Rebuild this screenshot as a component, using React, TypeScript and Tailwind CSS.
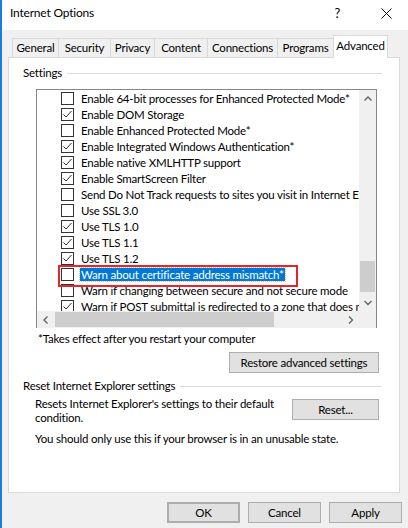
import React from "react";

const items: [string, boolean][] = [
  ["Enable 64-bit processes for Enhanced Protected Mode*", false],
  ["Enable DOM Storage", true],
  ["Enable Enhanced Protected Mode*", false],
  ["Enable Integrated Windows Authentication*", true],
  ["Enable native XMLHTTP support", true],
  ["Enable SmartScreen Filter", true],
  ["Send Do Not Track requests to sites you visit in Internet Explorer*", false],
  ["Use SSL 3.0", false],
  ["Use TLS 1.0", true],
  ["Use TLS 1.1", true],
  ["Use TLS 1.2", true],
  ["Warn about certificate address mismatch*", false],
  ["Warn if changing between secure and not secure mode", false],
  ["Warn if POST submittal is redirected to a zone that does not permit posts", true],
];

function Check({ checked }: { checked: boolean }) {
  return (
    <div className="w-[13px] h-[13px] border border-[#333333] bg-white shrink-0 flex items-center justify-center">
      {checked && (
        <svg width="11" height="11" viewBox="0 0 11 11">
          <polyline points="1.5,5.5 4,8 9.5,2" fill="none" stroke="#333" strokeWidth="1" />
        </svg>
      )}
    </div>
  );
}

function Chevron({ dir }: { dir: "up" | "down" | "left" | "right" }) {
  const pts =
    dir === "up"
      ? "0.5,4.5 4,1 7.5,4.5"
      : dir === "down"
      ? "0.5,1 4,4.5 7.5,1"
      : dir === "left"
      ? "4.5,0.5 1,4 4.5,7.5"
      : "1,0.5 4.5,4 1,7.5";
  const w = dir === "up" || dir === "down" ? 8 : 6;
  const h = dir === "up" || dir === "down" ? 6 : 8;
  return (
    <svg width={w} height={h} viewBox={`0 0 ${w} ${h}`}>
      <polyline points={pts} fill="none" stroke="#606060" strokeWidth="1.3" />
    </svg>
  );
}

function Btn({ children, className = "" }: { children: React.ReactNode; className?: string }) {
  return (
    <div
      className={
        "h-[21px] bg-[#e1e1e1] border border-[#adadad] flex items-center justify-center text-black whitespace-nowrap " +
        className
      }
    >
      {children}
    </div>
  );
}

export default function App() {
  const tabs: [string, number][] = [
    ["General", 46],
    ["Security", 52],
    ["Privacy", 44],
    ["Content", 53],
    ["Connections", 70],
    ["Programs", 56],
  ];
  return (
    <div
      className="w-[408px] h-[528px] bg-[#f0f0f0] flex overflow-hidden text-black text-[11.5px] tracking-[-0.2px]"
      style={{ fontFamily: 'Lato, "Noto Sans", sans-serif' }}
    >
      <div className="w-[2px] h-full bg-[#1a7fd4] shrink-0" />
      <div className="flex-1 flex flex-col">
        {/* Title bar */}
        <div className="h-[30px] bg-white flex items-center relative">
          <span className="ml-[8px] text-[12px] leading-none mt-[-4px]">Internet Options</span>
          <span className="ml-auto mr-[41px] text-[13px] leading-none mt-[-4px]">?</span>
          <svg width="11" height="11" viewBox="0 0 11 11" className="mr-[16px] mt-[-4px]">
            <line x1="0.5" y1="0.5" x2="10.5" y2="10.5" stroke="#111" strokeWidth="1" />
            <line x1="10.5" y1="0.5" x2="0.5" y2="10.5" stroke="#111" strokeWidth="1" />
          </svg>
        </div>

        {/* Tabs */}
        <div className="flex items-end pl-[10px] mt-[5px] h-[23px] -mb-px relative z-10">
          {tabs.map(([t, w]) => (
            <div
              key={t}
              className="h-[19px] mb-px border-t border-l border-[#d9d9d9] flex items-center justify-center leading-none"
              style={{ width: w }}
            >
              <span className="mt-[-1px]">{t}</span>
            </div>
          ))}
          <div className="h-[23px] w-[55px] bg-white border-t border-l border-r border-[#d9d9d9] flex items-center justify-center leading-none">
            <span className="mt-[-2px]">Advanced</span>
          </div>
        </div>

        {/* Panel */}
        <div className="ml-[6px] w-[392px] h-[436px] bg-white border border-[#d9d9d9] flex flex-col">
          <div className="mt-[7px] h-[16px] flex items-center pl-[14px] pr-[17px]">
            <span className="leading-none">Settings</span>
            <div className="flex-1 h-px bg-[#dcdcdc] ml-[5px]" />
          </div>

          {/* List box */}
          <div className="relative mt-[8px] ml-[27px] w-[341px] h-[239px] border border-[#828790] bg-white flex flex-col">
            <div className="flex h-[221px]">
              <div className="w-[322px] h-[221px] overflow-hidden flex flex-col">
                {items.map(([label, checked], i) => {
                  const sel = i === 11;
                  return (
                    <div key={i} className="h-[16px] shrink-0 flex items-center pl-[24px] whitespace-nowrap">
                      <Check checked={checked} />
                      <span
                        className={
                          "ml-[6px] leading-[13px] px-px " +
                          (sel ? "bg-[#0078d7] text-white outline-1 outline-dotted outline-[#f3b98a]" : "")
                        }
                      >
                        {label}
                      </span>
                    </div>
                  );
                })}
              </div>
              {/* vertical scrollbar */}
              <div className="w-[17px] h-[221px] bg-[#f0f0f0] flex flex-col items-center">
                <div className="h-[17px] flex items-center justify-center">
                  <Chevron dir="up" />
                </div>
                <div className="flex-1 w-full flex flex-col items-center">
                  <div className="mt-[154px] w-[15px] h-[31px] bg-[#cdcdcd]" />
                </div>
                <div className="h-[17px] flex items-center justify-center">
                  <Chevron dir="down" />
                </div>
              </div>
            </div>
            {/* horizontal scrollbar */}
            <div className="flex h-[17px]">
              <div className="w-[322px] h-[17px] bg-[#f0f0f0] flex items-center">
                <div className="w-[17px] h-full flex items-center justify-center">
                  <Chevron dir="left" />
                </div>
                <div className="ml-px w-[219px] h-[15px] bg-[#cdcdcd]" />
                <div className="flex-1" />
                <div className="w-[17px] h-full flex items-center justify-center">
                  <Chevron dir="right" />
                </div>
              </div>
              <div className="w-[17px] h-[17px] bg-[#f0f0f0]" />
            </div>
            {/* annotation box */}
            <div className="absolute left-[21px] top-[175px] w-[240px] h-[22px] border-2 border-[#e3262e] pointer-events-none" />
          </div>

          <div className="mt-[3px] h-[16px] flex items-center pl-[29px] leading-none">
            *Takes effect after you restart your computer
          </div>
          <div className="mt-[5px] flex justify-end pr-[20px]">
            <Btn className="w-[150px]">Restore advanced settings</Btn>
          </div>

          <div className="mt-[5px] h-[16px] flex items-center pl-[14px] pr-[17px]">
            <span className="leading-none whitespace-nowrap">Reset Internet Explorer settings</span>
            <div className="flex-1 h-px bg-[#dcdcdc] ml-[5px]" />
          </div>
          <div className="mt-[3px] flex pl-[26px] pr-[20px]">
            <div className="leading-[14px] whitespace-nowrap">
              <div>Resets Internet Explorer&apos;s settings to their default</div>
              <div>condition.</div>
            </div>
            <div className="ml-auto mt-[2px]">
              <Btn className="w-[87px]">Reset...</Btn>
            </div>
          </div>
          <div className="mt-[7px] pl-[26px] leading-[14px] whitespace-nowrap">
            You should only use this if your browser is in an unusable state.
          </div>
        </div>

        {/* Bottom buttons */}
        <div className="mt-[9px] flex justify-end pr-[6px] gap-[8px]">
          <Btn className="w-[73px] border-[#0078d7] border-2">OK</Btn>
          <Btn className="w-[73px]">Cancel</Btn>
          <Btn className="w-[73px]">Apply</Btn>
        </div>
      </div>
    </div>
  );
}
